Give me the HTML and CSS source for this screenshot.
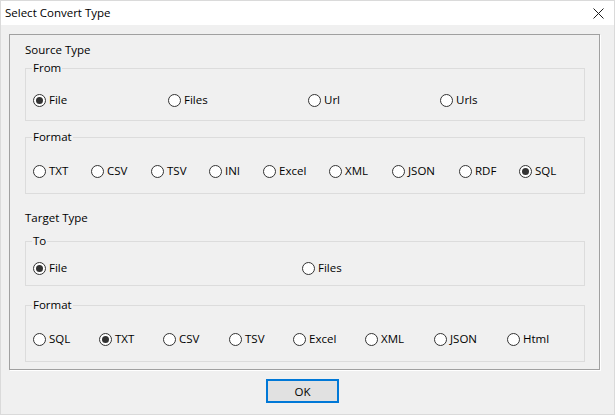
FILE: index.html
```html
<!DOCTYPE html>
<html>
<head>
<meta charset="utf-8">
<link rel="stylesheet" href="styles.css">
</head>
<body>
<div class="window">
  <div class="titlebar">
    <span class="title">Select Convert Type</span>
    <svg class="close" width="11" height="11" viewBox="0 0 11 11"><path d="M0.5 0.5 L10.5 10.5 M10.5 0.5 L0.5 10.5" stroke="#1a1a1a" stroke-width="1" fill="none"/></svg>
  </div>
  <div class="content">
    <div class="panel">
      <div class="section-label">Source Type</div>
      <fieldset class="group group-from">
        <legend>From</legend>
        <div class="row cols-from">
          <label class="radio checked"><span class="dot"></span>File</label>
          <label class="radio"><span class="dot"></span>Files</label>
          <label class="radio"><span class="dot"></span>Url</label>
          <label class="radio"><span class="dot"></span>Urls</label>
        </div>
      </fieldset>
      <fieldset class="group group-format">
        <legend>Format</legend>
        <div class="row cols-src">
          <label class="radio"><span class="dot"></span>TXT</label>
          <label class="radio"><span class="dot"></span>CSV</label>
          <label class="radio"><span class="dot"></span>TSV</label>
          <label class="radio"><span class="dot"></span>INI</label>
          <label class="radio"><span class="dot"></span>Excel</label>
          <label class="radio"><span class="dot"></span>XML</label>
          <label class="radio"><span class="dot"></span>JSON</label>
          <label class="radio"><span class="dot"></span>RDF</label>
          <label class="radio checked"><span class="dot"></span>SQL</label>
        </div>
      </fieldset>
      <div class="section-label section-target">Target Type</div>
      <fieldset class="group group-to">
        <legend>To</legend>
        <div class="row cols-to">
          <label class="radio checked"><span class="dot"></span>File</label>
          <label class="radio"><span class="dot"></span>Files</label>
        </div>
      </fieldset>
      <fieldset class="group group-format group-tformat">
        <legend>Format</legend>
        <div class="row cols-tgt">
          <label class="radio"><span class="dot"></span>SQL</label>
          <label class="radio checked"><span class="dot"></span>TXT</label>
          <label class="radio"><span class="dot"></span>CSV</label>
          <label class="radio"><span class="dot"></span>TSV</label>
          <label class="radio"><span class="dot"></span>Excel</label>
          <label class="radio"><span class="dot"></span>XML</label>
          <label class="radio"><span class="dot"></span>JSON</label>
          <label class="radio"><span class="dot"></span>Html</label>
        </div>
      </fieldset>
    </div>
    <div class="footer">
      <button class="ok">OK</button>
    </div>
  </div>
</div>
</body>
</html>
```

FILE: styles.css
```css
html, body {
  margin: 0;
  padding: 0;
}
body {
  font-family: "Open Sans", "Liberation Sans", sans-serif;
  font-size: 11.5px;
  line-height: 16px;
  color: #000;
  background: #f0f0f0;
}
.window {
  width: 615px;
  height: 415px;
  box-sizing: border-box;
  border: 1px solid #dadada;
  background: #f0f0f0;
}
.titlebar {
  height: 24px;
  background: #fff;
  display: flex;
  align-items: center;
  justify-content: space-between;
  padding: 0 10px 0 4px;
}
.title {
  color: #000;
}
.close {
  display: block;
}
.content {
  padding-top: 9px;
}
.panel {
  margin-left: 8px;
  width: 591px;
  box-sizing: border-box;
  border: 1px solid #a0a0a0;
  box-shadow: 1px 1px 0 #ffffff;
  padding: 7px 14px 7px 15px;
}
.section-label {
  height: 16px;
}
.section-target {
  margin-top: 16px;
}
.group {
  margin: 0;
  border: 1px solid #dcdcdc;
  padding: 0 0 0 7px;
  min-width: 0;
}
.group legend {
  margin-left: -1px;
  padding: 0 1px;
  line-height: 16px;
  height: 16px;
}
.group-from {
  margin-top: 2px;
  padding-top: 16px;
  padding-bottom: 12px;
}
.group-format {
  margin-top: 8px;
  padding-top: 18px;
  padding-bottom: 14px;
}
.group-to {
  margin-top: 7px;
  padding-top: 11px;
  padding-bottom: 9px;
}
.group-tformat {
  margin-top: 11px;
}
.row {
  display: grid;
  height: 16px;
}
.cols-from {
  grid-template-columns: 135px 140px 132px auto;
}
.cols-to {
  grid-template-columns: 269px auto;
}
.cols-src {
  grid-template-columns: 58px 60px 58px 54px 66px 63px 67px 60px auto;
}
.cols-tgt {
  grid-template-columns: 66px 64px 66px 64px 72px 69px 73px auto;
}
.radio {
  display: flex;
  align-items: center;
  gap: 3px;
  white-space: nowrap;
}
.dot {
  width: 13px;
  height: 13px;
  box-sizing: border-box;
  border: 1px solid #333;
  border-radius: 50%;
  background: #fff;
  display: flex;
  align-items: center;
  justify-content: center;
  flex: none;
}
.checked .dot::after {
  content: "";
  width: 7px;
  height: 7px;
  border-radius: 50%;
  background: #333;
}
.footer {
  padding-left: 265px;
  padding-top: 9px;
}
.ok {
  width: 73px;
  height: 24px;
  box-sizing: border-box;
  border: 2px solid #0078d7;
  background: #e1e1e1;
  font-family: "Open Sans", "Liberation Sans", sans-serif;
  font-size: 11.5px;
  color: #000;
  padding: 0;
  margin: 0;
}
```
